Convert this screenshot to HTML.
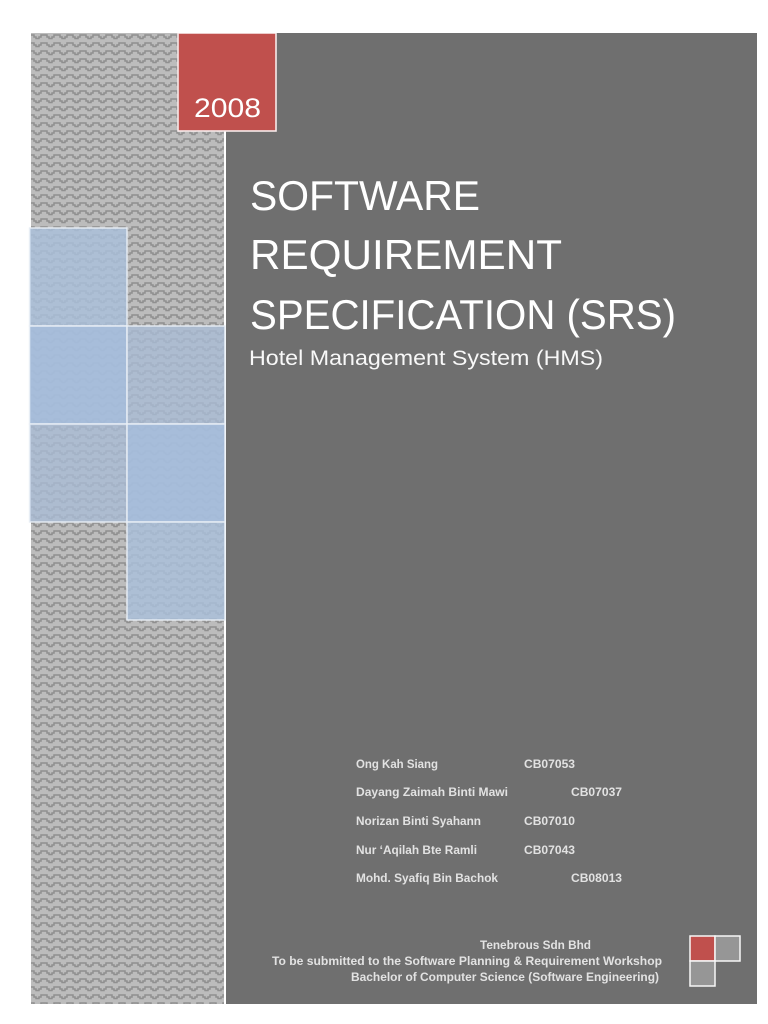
<!DOCTYPE html>
<html>
<head>
<meta charset="utf-8">
<style>
html,body{margin:0;padding:0;background:#fff;}
svg{display:block;}
text{font-family:"Liberation Sans",sans-serif;fill:#fff;}
.s{font-size:11.5px;font-weight:bold;fill:#e2e2e2;}
</style>
</head>
<body>
<svg width="768" height="1024" viewBox="0 0 768 1024" xmlns="http://www.w3.org/2000/svg">
<defs>
<pattern id="w" x="31" y="33" width="13" height="8" patternUnits="userSpaceOnUse">
<rect width="13" height="8" fill="#bcbcbc"/>
<path d="M0 2H3V4H5V5.500H8V4H10V2H13" fill="none" stroke="#8f8f8f" stroke-width="1.500"/>
</pattern>
</defs>
<rect x="0" y="0" width="768" height="1024" fill="#fff"/>
<rect x="31" y="33" width="193" height="971" fill="url(#w)"/>
<rect x="226" y="33" width="531" height="971" fill="#6f6f6f"/>
<g stroke="#e8eef5" stroke-width="1.400">
<rect x="29.500" y="228" width="97.500" height="98" fill="#a9bfda" fill-opacity=".82"/>
<rect x="29.500" y="326" width="97.500" height="98" fill="#a6bddc" fill-opacity=".94"/>
<rect x="127" y="326" width="98" height="98" fill="#a9bdd6" fill-opacity=".78"/>
<rect x="29.500" y="424" width="97.500" height="98" fill="#a9bdd6" fill-opacity=".78"/>
<rect x="127" y="424" width="98" height="98" fill="#a6bddc" fill-opacity=".94"/>
<rect x="127" y="522" width="98" height="98" fill="#a9bfda" fill-opacity=".82"/>
</g>
<rect x="178" y="33" width="98" height="98" fill="#c0504d" stroke="#f7eaea" stroke-width="1.600"/>
<rect x="170" y="30" width="120" height="3" fill="#fff"/>
<text x="194" y="117" font-size="27" textLength="67" lengthAdjust="spacingAndGlyphs">2008</text>
<text x="250" y="210" font-size="42" textLength="230" lengthAdjust="spacingAndGlyphs">SOFTWARE</text>
<text x="250" y="269" font-size="42" textLength="312" lengthAdjust="spacingAndGlyphs">REQUIREMENT</text>
<text x="250" y="329" font-size="42" textLength="426" lengthAdjust="spacingAndGlyphs">SPECIFICATION (SRS)</text>
<text x="249" y="365" font-size="21" textLength="354" lengthAdjust="spacingAndGlyphs" fill-opacity=".95">Hotel Management System (HMS)</text>
<text class="s" x="356" y="768" textLength="82" lengthAdjust="spacingAndGlyphs">Ong Kah Siang</text>
<text class="s" x="524" y="768" textLength="51" lengthAdjust="spacingAndGlyphs">CB07053</text>
<text class="s" x="356" y="796" textLength="152" lengthAdjust="spacingAndGlyphs">Dayang Zaimah Binti Mawi</text>
<text class="s" x="571" y="796" textLength="51" lengthAdjust="spacingAndGlyphs">CB07037</text>
<text class="s" x="356" y="825" textLength="125" lengthAdjust="spacingAndGlyphs">Norizan Binti Syahann</text>
<text class="s" x="524" y="825" textLength="51" lengthAdjust="spacingAndGlyphs">CB07010</text>
<text class="s" x="356" y="854" textLength="121" lengthAdjust="spacingAndGlyphs">Nur ‘Aqilah Bte Ramli</text>
<text class="s" x="524" y="854" textLength="51" lengthAdjust="spacingAndGlyphs">CB07043</text>
<text class="s" x="356" y="882" textLength="142" lengthAdjust="spacingAndGlyphs">Mohd. Syafiq Bin Bachok</text>
<text class="s" x="571" y="882" textLength="51" lengthAdjust="spacingAndGlyphs">CB08013</text>
<text class="s" x="480" y="949" textLength="111" lengthAdjust="spacingAndGlyphs">Tenebrous Sdn Bhd</text>
<text class="s" x="272" y="965" textLength="390" lengthAdjust="spacingAndGlyphs">To be submitted to the Software Planning &amp; Requirement Workshop</text>
<text class="s" x="351" y="981" textLength="308" lengthAdjust="spacingAndGlyphs">Bachelor of Computer Science (Software Engineering)</text>
<g stroke="#f7f7f7" stroke-width="1.500">
<rect x="690" y="936" width="25" height="25" fill="#c0504d"/>
<rect x="715" y="936" width="25" height="25" fill="#969696"/>
<rect x="690" y="961" width="25" height="25" fill="#969696"/>
</g>
</svg>
</body>
</html>
